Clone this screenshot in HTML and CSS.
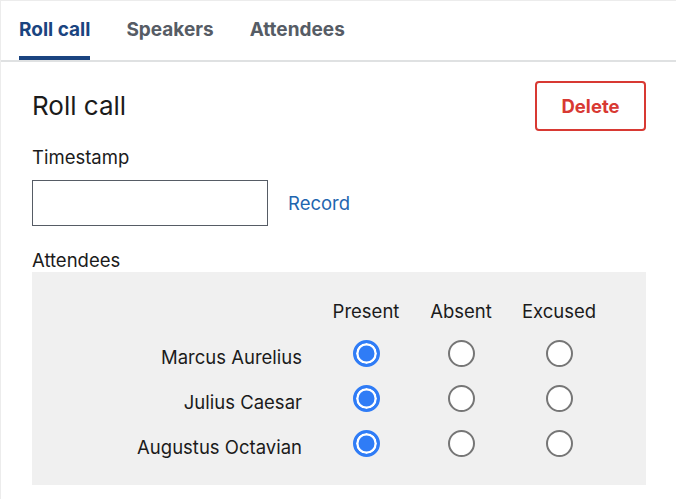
FILE: index.html
```html
<!DOCTYPE html>
<html lang="en">
<head>
<meta charset="utf-8">
<title>Roll call</title>
<link rel="stylesheet" href="styles.css">
</head>
<body>
<div class="card">
  <nav class="tabs">
    <a class="tab tab-active" href="#">Roll call</a>
    <a class="tab" href="#">Speakers</a>
    <a class="tab" href="#">Attendees</a>
  </nav>
  <main class="content">
    <div class="head-row">
      <h1 class="title">Roll call</h1>
      <button class="btn-delete" type="button">Delete</button>
    </div>
    <label class="label" for="ts">Timestamp</label>
    <div class="ts-row">
      <input class="ts-input" id="ts" type="text">
      <a class="record" href="#">Record</a>
    </div>
    <div class="label label-att">Attendees</div>
    <div class="att-box">
      <div class="att-grid">
        <div></div>
        <div class="hdr">Present</div>
        <div class="hdr">Absent</div>
        <div class="hdr">Excused</div>

        <div class="name">Marcus Aurelius</div>
        <div class="cell"><input class="radio" type="radio" name="r1" checked></div>
        <div class="cell"><input class="radio" type="radio" name="r1"></div>
        <div class="cell"><input class="radio" type="radio" name="r1"></div>

        <div class="name">Julius Caesar</div>
        <div class="cell"><input class="radio" type="radio" name="r2" checked></div>
        <div class="cell"><input class="radio" type="radio" name="r2"></div>
        <div class="cell"><input class="radio" type="radio" name="r2"></div>

        <div class="name">Augustus Octavian</div>
        <div class="cell"><input class="radio" type="radio" name="r3" checked></div>
        <div class="cell"><input class="radio" type="radio" name="r3"></div>
        <div class="cell"><input class="radio" type="radio" name="r3"></div>
      </div>
    </div>
  </main>
</div>
</body>
</html>
```
FILE: styles.css
```css
html, body {
  margin: 0;
  padding: 0;
  background: #fff;
}
body {
  font-family: "Inter", "Roboto", "Liberation Sans", sans-serif;
  color: #1b1b1b;
  font-size: 18.5px;
  line-height: 24px;
}
.card {
  box-sizing: border-box;
  border-top: 1px solid #ececec;
  border-left: 1px solid #ececec;
  min-height: 100vh;
}
.tabs {
  display: flex;
  gap: 36px;
  padding-left: 18px;
  height: 59px;
  border-bottom: 2px solid #dfe1e2;
}
.tab {
  box-sizing: border-box;
  height: 59px;
  padding-top: 17px;
  border-bottom: 4px solid transparent;
  font-weight: 700;
  font-size: 19px;
  line-height: 24px;
  color: #565c65;
  text-decoration: none;
}
.tab-active {
  color: #1a4480;
  border-bottom-color: #1a4480;
}
.content {
  padding: 19px 30px 0 31px;
}
.head-row {
  display: flex;
  justify-content: space-between;
  align-items: center;
  height: 50px;
}
.title {
  margin: 0;
  font-size: 26px;
  font-weight: 400;
  line-height: 32px;
  color: #1b1b1b;
}
.btn-delete {
  box-sizing: border-box;
  width: 111px;
  height: 50px;
  border: 2px solid #d83933;
  border-radius: 4px;
  background: #fff;
  color: #d83933;
  font-family: inherit;
  font-size: 18.5px;
  font-weight: 700;
  padding: 0;
}
.label {
  display: block;
  margin-top: 14px;
  line-height: 24px;
}
.ts-row {
  margin-top: 11px;
  display: flex;
  align-items: center;
  gap: 20px;
}
.ts-input {
  box-sizing: border-box;
  width: 236px;
  height: 46px;
  margin: 0;
  border: 1px solid #565c65;
  border-radius: 0;
  background: #fff;
  font-family: inherit;
  font-size: 18px;
}
.record {
  color: #1f66b0;
  text-decoration: none;
}
.label-att {
  margin-top: 22px;
}
.att-box {
  margin-top: 0;
  background: #f0f0f0;
  padding: 18px 0 19px;
}
.att-grid {
  display: grid;
  grid-template-columns: 286px 96px 94px 102px;
  grid-template-rows: 41px repeat(3, 45px);
}
.hdr {
  align-self: center;
  text-align: center;
}
.name {
  align-self: center;
  text-align: right;
  padding-right: 16px;
  padding-top: 6px;
}
.cell {
  display: flex;
  justify-content: center;
  align-items: center;
}
.radio {
  appearance: none;
  -webkit-appearance: none;
  box-sizing: border-box;
  width: 27px;
  height: 27px;
  margin: 0;
  border: 2px solid #767676;
  border-radius: 50%;
  background: #fff;
}
.radio:checked {
  border: 3px solid #2f7cf6;
  background: #2f7cf6;
  box-shadow: inset 0 0 0 2.5px #fff;
}
```
